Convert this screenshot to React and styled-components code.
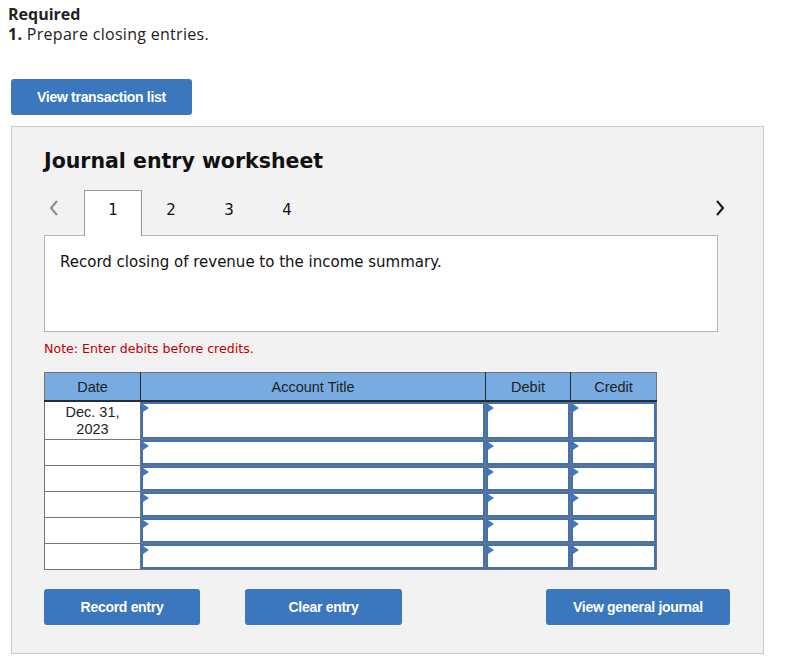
import React from "react";
import styled, { createGlobalStyle } from "styled-components";

const rows = [
  { date: "Dec. 31,\n2023", tall: true },
  { date: "" },
  { date: "" },
  { date: "" },
  { date: "" },
  { date: "" },
];

const App = () => {
  return (
    <Page>
      <GlobalStyle />
      <Required>Required</Required>
      <Task>
        <b>1.</b> Prepare closing entries.
      </Task>
      <BlueButton $w={181} $ml={3} $mt={35}>
        View transaction list
      </BlueButton>

      <Panel>
        <Title>Journal entry worksheet</Title>
        <TabRow>
          <Arrow $muted>
            <svg width="12" height="18" viewBox="0 0 12 18">
              <path d="M9 2 L3 9 L9 16" fill="none" stroke="#8c8c8c" strokeWidth="2" />
            </svg>
          </Arrow>
          <Tabs>
            {[1, 2, 3, 4].map((n) => (
              <Tab key={n} $active={n === 1}>
                {n}
              </Tab>
            ))}
          </Tabs>
          <Arrow>
            <svg width="12" height="18" viewBox="0 0 12 18">
              <path d="M3 2 L9 9 L3 16" fill="none" stroke="#111" strokeWidth="2" />
            </svg>
          </Arrow>
        </TabRow>
        <Prompt>Record closing of revenue to the income summary.</Prompt>
        <Note>Note: Enter debits before credits.</Note>

        <Table>
          <colgroup>
            <col style={{ width: 96 }} />
            <col style={{ width: 345 }} />
            <col style={{ width: 85 }} />
            <col style={{ width: 86 }} />
          </colgroup>
          <thead>
            <tr>
              <Th>Date</Th>
              <Th>Account Title</Th>
              <Th>Debit</Th>
              <Th>Credit</Th>
            </tr>
          </thead>
          <tbody>
            {rows.map((r, i) => (
              <tr key={i}>
                <DateCell $tall={r.tall}>{r.date}</DateCell>
                {[0, 1, 2].map((c) => (
                  <InputCell key={c}>
                    <Field $tall={r.tall} />
                  </InputCell>
                ))}
              </tr>
            ))}
          </tbody>
        </Table>

        <Actions>
          <BlueButton $w={156}>Record entry</BlueButton>
          <BlueButton $w={157} $ml={45}>
            Clear entry
          </BlueButton>
          <BlueButton $w={184} $ml={144}>
            View general journal
          </BlueButton>
        </Actions>
      </Panel>
    </Page>
  );
};

export default App;

// styles
const GlobalStyle = createGlobalStyle`
  body {
    margin: 0;
    background: #fff;
    font-family: "Open Sans", "Liberation Sans", sans-serif;
  }
`;
const Page = styled.div`
  padding: 4px 0 0 8px;
  width: 800px;
  box-sizing: border-box;
`;
const Required = styled.div`
  font-weight: bold;
  font-size: 16px;
  line-height: 20px;
  color: #222;
`;
const Task = styled.div`
  font-size: 16px;
  line-height: 20px;
  letter-spacing: 0.3px;
  color: #222;
`;
const BlueButton = styled.div`
  width: ${(p) => p.$w}px;
  height: 36px;
  margin-left: ${(p) => p.$ml || 0}px;
  margin-top: ${(p) => p.$mt || 0}px;
  display: flex;
  align-items: center;
  justify-content: center;
  background: #3a77bc;
  border-radius: 3px;
  color: #fff;
  font-family: "Liberation Sans", Arial, sans-serif;
  font-weight: bold;
  font-size: 14px;
  letter-spacing: -0.3px;
  box-sizing: border-box;
`;
const Panel = styled.div`
  margin: 11px 0 0 3px;
  width: 753px;
  height: 528px;
  box-sizing: border-box;
  background: #f2f2f2;
  border: 1px solid #c8c8c8;
  padding: 22px 0 0 32px;
`;
const Title = styled.div`
  font-family: "DejaVu Sans", Verdana, sans-serif;
  font-weight: bold;
  font-size: 20.5px;
  line-height: 24px;
  color: #111;
`;
const TabRow = styled.div`
  display: flex;
  align-items: center;
  width: 682px;
  height: 45px;
  margin-top: 17px;
`;
const Arrow = styled.div`
  width: 40px;
  display: flex;
  justify-content: ${(p) => (p.$muted ? "flex-start" : "flex-end")};
  padding-left: ${(p) => (p.$muted ? "4px" : "0")};
  margin-right: ${(p) => (p.$muted ? "-4px" : "0")};
  margin-bottom: 9px;
`;
const Tabs = styled.div`
  display: flex;
  flex: 1;
  align-self: stretch;
`;
const Tab = styled.div`
  width: 58px;
  box-sizing: border-box;
  display: flex;
  align-items: center;
  justify-content: center;
  padding-bottom: 8px;
  font-family: "DejaVu Sans", Verdana, sans-serif;
  font-size: 15px;
  color: #111;
  background: ${(p) => (p.$active ? "#fff" : "transparent")};
  border: 1px solid ${(p) => (p.$active ? "#9a9a9a" : "transparent")};
  border-bottom: none;
  margin-bottom: -1px;
  position: relative;
  z-index: 1;
`;
const Prompt = styled.div`
  width: 674px;
  height: 97px;
  box-sizing: border-box;
  background: #fff;
  border: 1px solid #b4b4b4;
  padding: 17px 0 0 15px;
  font-family: "DejaVu Sans", Verdana, sans-serif;
  font-size: 15px;
  color: #111;
`;
const Note = styled.div`
  margin-top: 9px;
  font-family: "DejaVu Sans", Verdana, sans-serif;
  font-size: 12.6px;
  line-height: 15px;
  color: #c00000;
`;
const Table = styled.table`
  margin-top: 16px;
  width: 612px;
  table-layout: fixed;
  border-collapse: collapse;
  background: #fff;
  font-family: "Liberation Sans", Arial, sans-serif;
  font-size: 14.5px;
  color: #222;
`;
const Th = styled.th`
  height: 27px;
  padding: 0;
  background: #78abe2;
  font-weight: normal;
  border: 1px solid #757575;
  border-bottom: 2px solid #2b2b2b;
  border-right-color: #2b2b2b;
  &:last-child {
    border-right-color: #757575;
  }
`;
const DateCell = styled.td`
  height: ${(p) => (p.$tall ? 37 : 25)}px;
  padding: 0;
  text-align: center;
  vertical-align: top;
  white-space: pre-line;
  line-height: 17px;
  padding-top: 2px;
  box-sizing: border-box;
  border: 1px solid #757575;
`;
const InputCell = styled.td`
  padding: 0;
  border: 1px solid #757575;
  position: relative;
`;
const Field = styled.div`
  height: ${(p) => (p.$tall ? 33 : 21)}px;
  border: 2px solid #3f71b3;
  background: #fff;
  position: relative;
  &::before {
    content: "";
    position: absolute;
    left: 0;
    top: 0;
    border-left: 6px solid #3d7ac4;
    border-top: 4px solid transparent;
    border-bottom: 4px solid transparent;
  }
`;
const Actions = styled.div`
  display: flex;
  margin-top: 19px;
`;
